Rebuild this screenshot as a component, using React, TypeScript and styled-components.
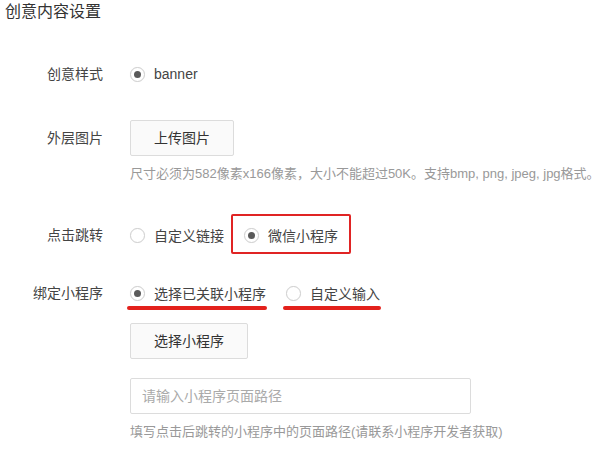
import React from "react";
import styled, { createGlobalStyle, css } from "styled-components";

const Global = createGlobalStyle`
  html, body { margin: 0; padding: 0; background: #fff; }
  body {
    font-family: "Liberation Sans", "Noto Sans CJK SC", sans-serif;
    color: #333;
    -webkit-font-smoothing: antialiased;
  }
`;

const Page = styled.div`
  width: 604px;
  height: 463px;
  overflow: hidden;
  background: #fff;
`;

const Title = styled.h2`
  margin: 0;
  padding-left: 5px;
  font-size: 16px;
  font-weight: 400;
  line-height: 24px;
  color: #333;
`;

const Form = styled.div`
  display: flex;
  flex-direction: column;
`;

const Row = styled.div<{ $mt: number }>`
  display: grid;
  grid-template-columns: 103px 1fr;
  column-gap: 27px;
  align-items: start;
  margin-top: ${(p) => p.$mt}px;
`;

const Label = styled.div<{ $h?: number }>`
  text-align: right;
  font-size: 14px;
  color: #444;
  line-height: ${(p) => p.$h ?? 24}px;
  white-space: nowrap;
`;

const Field = styled.div`
  display: flex;
  flex-direction: column;
  align-items: flex-start;
`;

const RadioGroup = styled.div`
  display: flex;
  align-items: center;
  gap: 20px;
  height: 24px;
`;

const Option = styled.label<{ $mark?: "box" | "line" }>`
  position: relative;
  display: flex;
  align-items: center;
  gap: 9px;
  height: 24px;
  font-size: 14px;
  color: #444;
  white-space: nowrap;
  ${(p) =>
    p.$mark === "box" &&
    css`
      &::after {
        content: "";
        position: absolute;
        left: -13px;
        right: -13px;
        top: -9px;
        bottom: -7px;
        border: 2.5px solid #e02424;
        border-radius: 2px;
        pointer-events: none;
      }
    `}
  ${(p) =>
    p.$mark === "line" &&
    css`
      &::after {
        content: "";
        position: absolute;
        left: -3px;
        right: -1px;
        bottom: -5px;
        height: 4px;
        background: #e3211c;
        border-radius: 2px;
        pointer-events: none;
      }
    `}
`;

const Circle = styled.span<{ $checked?: boolean }>`
  box-sizing: border-box;
  width: 15px;
  height: 15px;
  border-radius: 50%;
  border: 1px solid #cfcfcf;
  background: #fff;
  box-shadow: 0 0 1px rgba(0, 0, 0, 0.08);
  display: flex;
  align-items: center;
  justify-content: center;
  flex: none;
  &::before {
    content: "";
    width: 7px;
    height: 7px;
    border-radius: 50%;
    background: ${(p) => (p.$checked ? "#5a5a5a" : "transparent")};
  }
`;

const Button = styled.button<{ $mt?: number }>`
  box-sizing: border-box;
  height: 36px;
  padding: 0 23px;
  margin-top: ${(p) => p.$mt ?? 0}px;
  border: 1px solid #dcdcdc;
  border-radius: 2px;
  background: #fafafa;
  font-family: inherit;
  font-size: 14px;
  color: #333;
  line-height: 34px;
  cursor: pointer;
`;

const Input = styled.input`
  box-sizing: border-box;
  width: 341px;
  height: 36px;
  margin-top: 19px;
  padding: 0 11px;
  border: 1px solid #dcdcdc;
  border-radius: 2px;
  background: #fff;
  font-family: inherit;
  font-size: 14px;
  color: #333;
  outline: none;
  &::placeholder {
    color: #aaa;
  }
`;

const Hint = styled.div`
  margin-top: 8px;
  font-size: 13px;
  line-height: 20px;
  color: #999;
  white-space: nowrap;
`;

const Radio: React.FC<{
  checked?: boolean;
  mark?: "box" | "line";
  children: React.ReactNode;
}> = ({ checked, mark, children }) => (
  <Option $mark={mark}>
    <Circle $checked={checked} />
    <span>{children}</span>
  </Option>
);

export default function App() {
  return (
    <Page>
      <Global />
      <Title>创意内容设置</Title>
      <Form>
        <Row $mt={38}>
          <Label>创意样式</Label>
          <RadioGroup>
            <Radio checked>banner</Radio>
          </RadioGroup>
        </Row>
        <Row $mt={34}>
          <Label $h={36}>外层图片</Label>
          <Field>
            <Button>上传图片</Button>
            <Hint>尺寸必须为582像素x166像素，大小不能超过50K。支持bmp, png, jpeg, jpg格式。</Hint>
          </Field>
        </Row>
        <Row $mt={39}>
          <Label>点击跳转</Label>
          <RadioGroup>
            <Radio>自定义链接</Radio>
            <Radio checked mark="box">
              微信小程序
            </Radio>
          </RadioGroup>
        </Row>
        <Row $mt={34}>
          <Label>绑定小程序</Label>
          <Field>
            <RadioGroup>
              <Radio checked mark="line">
                选择已关联小程序
              </Radio>
              <Radio mark="line">自定义输入</Radio>
            </RadioGroup>
            <Button $mt={18}>选择小程序</Button>
            <Input placeholder="请输入小程序页面路径" />
            <Hint>填写点击后跳转的小程序中的页面路径(请联系小程序开发者获取)</Hint>
          </Field>
        </Row>
      </Form>
    </Page>
  );
}
